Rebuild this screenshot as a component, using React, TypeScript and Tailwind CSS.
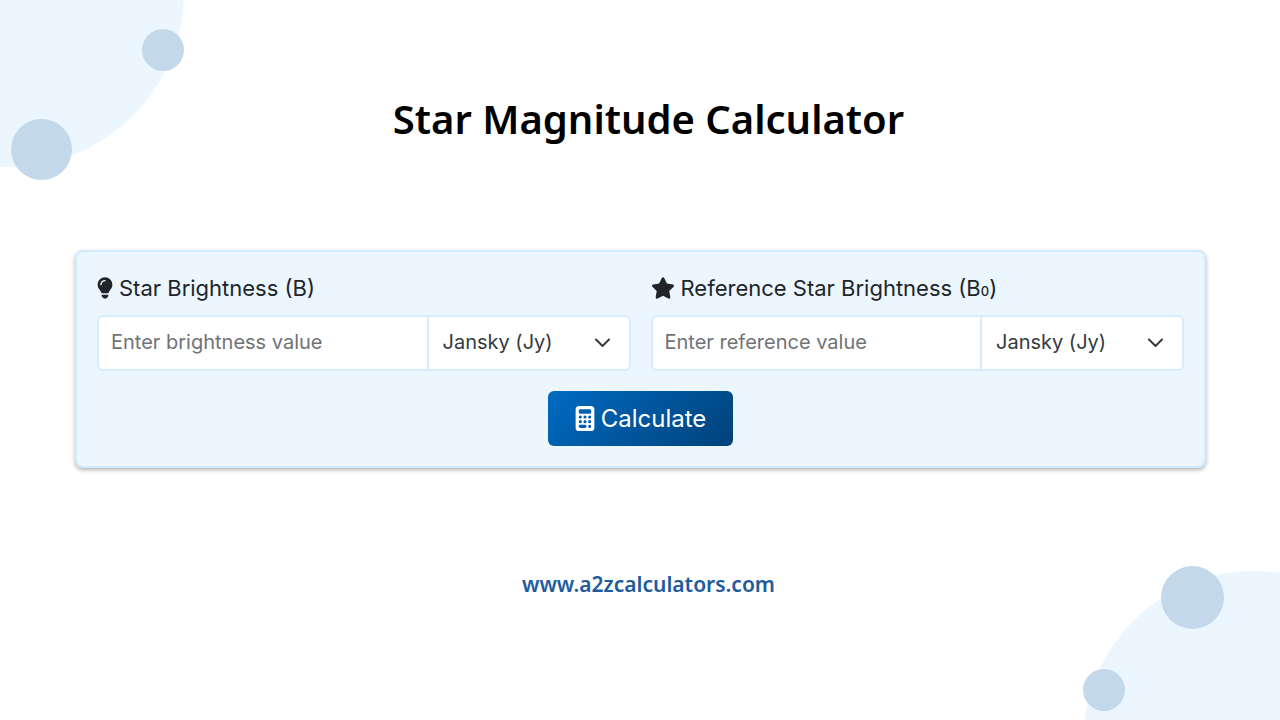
import { useState } from "react";
import { FaCalculator, FaLightbulb, FaStar } from "react-icons/fa6";
import type { ReactNode } from "react";

const units = ["Jansky (Jy)", "W/m²/Hz", "erg/s/cm²/Hz"];

type FieldProps = {
  id: string;
  icon: ReactNode;
  label: ReactNode;
  unitLabel: string;
  placeholder: string;
};

const BrightnessField = ({ id, icon, label, unitLabel, placeholder }: FieldProps) => {
  const [value, setValue] = useState("");
  const [unit, setUnit] = useState(units[0]);

  return (
    <div className="min-w-0">
      <label
        htmlFor={id}
        className="mb-[11px] flex items-center gap-1.5 text-[22px] leading-8 text-[#212529]"
      >
        {icon}
        <span>{label}</span>
      </label>
      <div className="flex h-14 overflow-hidden rounded-md border-2 border-[#d6ebfe] bg-white text-xl">
        <input
          id={id}
          type="text"
          value={value}
          onChange={(e) => setValue(e.target.value)}
          placeholder={placeholder}
          className="min-w-0 flex-1 px-3 pb-0.5 text-[#212529] outline-none placeholder:text-[#6f7376]"
        />
        <div className="relative w-[202px] shrink-0 border-l-2 border-[#d6ebfe]">
          <select
            aria-label={unitLabel}
            value={unit}
            onChange={(e) => setUnit(e.target.value)}
            className="h-full w-full appearance-none px-3.5 pb-0.5 text-[#343a40] outline-none"
          >
            {units.map((u) => (
              <option key={u}>{u}</option>
            ))}
          </select>
          <svg
            className="pointer-events-none absolute top-1/2 right-[18px] h-4 w-4 -translate-y-1/2"
            viewBox="0 0 16 16"
            fill="none"
            stroke="#343a40"
            strokeWidth={2}
            strokeLinecap="round"
            strokeLinejoin="round"
          >
            <path d="m1 4.5 6.5 6.5 6.5-6.5" />
          </svg>
        </div>
      </div>
    </div>
  );
};

const App = () => {
  return (
    <main className="relative flex min-h-screen flex-col overflow-hidden bg-white pr-[74px] pl-[75px] font-['Inter',sans-serif]">
      {/* Corner bubbles */}
      <div className="absolute -top-[183px] -left-[166px] size-[350px] rounded-full bg-[#ebf6ff]" />
      <div className="absolute top-[29px] left-[142px] size-[42px] rounded-full bg-[#c3d8eb]" />
      <div className="absolute top-[119px] left-[11px] size-[61px] rounded-full bg-[#c3d8eb]" />
      <div className="absolute -right-[145px] -bottom-[193px] size-[342px] rounded-full bg-[#ebf6ff]" />
      <div className="absolute right-[56px] bottom-[91px] size-[63px] rounded-full bg-[#c3d8eb]" />
      <div className="absolute right-[155px] bottom-[9px] size-[42px] rounded-full bg-[#c3d8eb]" />

      <h1 className="relative mt-[95px] pl-4 text-center font-['Noto_Sans',sans-serif] text-[40px] leading-[48px] font-semibold text-black">
        Star Magnitude Calculator
      </h1>

      {/* Calculator card */}
      <form
        onSubmit={(e) => e.preventDefault()}
        className="relative mt-[107px] rounded-lg border-2 border-[#d3e9fc] bg-[#ebf6ff] p-5 shadow-[0_2px_4px_rgba(0,0,0,0.3)]"
      >
        <div className="grid grid-cols-2 gap-5">
          <BrightnessField
            id="brightness"
            icon={<FaLightbulb className="h-[22px] w-4" />}
            label="Star Brightness (B)"
            unitLabel="Star brightness unit"
            placeholder="Enter brightness value"
          />
          <BrightnessField
            id="reference"
            icon={<FaStar className="h-[22px] w-6" />}
            label={
              <>
                Reference Star Brightness (B
                <sub className="bottom-0 text-[13px] font-medium">0</sub>)
              </>
            }
            unitLabel="Reference star brightness unit"
            placeholder="Enter reference value"
          />
        </div>
        <button
          type="submit"
          className="mx-auto mt-5 flex h-[55px] w-[185px] items-center justify-center gap-1.5 rounded-md bg-linear-135 from-[#006bc2] to-[#00427a] text-2xl text-white"
        >
          <FaCalculator className="h-[25px] w-5" />
          Calculate
        </button>
      </form>

      <footer className="relative mt-[100px] pl-4 text-center">
        <a
          href="https://www.a2zcalculators.com"
          className="font-['Noto_Sans',sans-serif] text-[21px] leading-8 font-semibold text-[#1f5c9e]"
        >
          www.a2zcalculators.com
        </a>
      </footer>
    </main>
  );
};

export default App;
